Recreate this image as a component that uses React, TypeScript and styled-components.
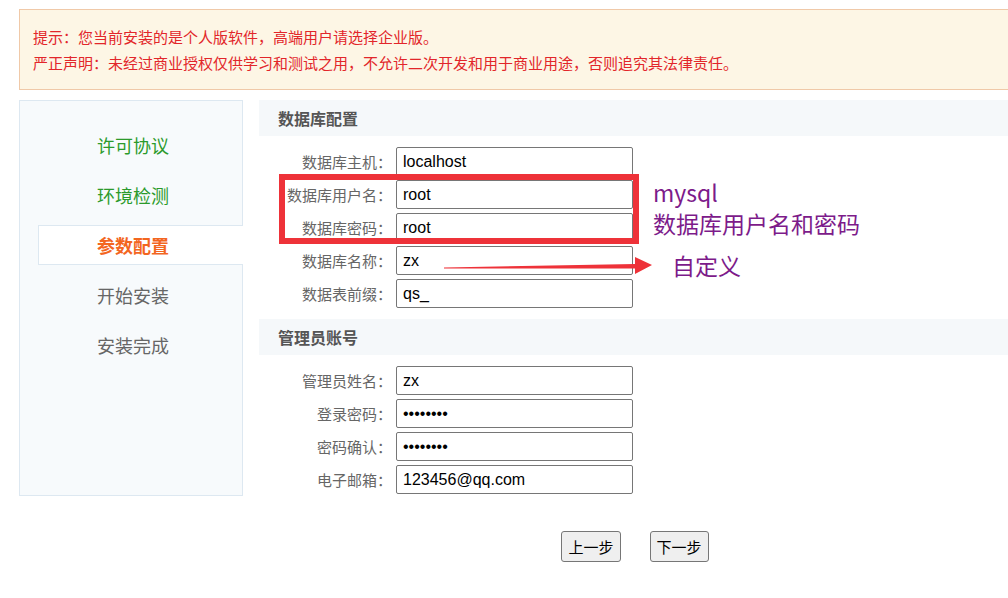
import React from "react";
import styled, { createGlobalStyle } from "styled-components";

const Global = createGlobalStyle`
  html, body { margin: 0; padding: 0; overflow: hidden; background: #fff; }
  body { font-family: "Liberation Sans", "Noto Sans CJK SC", sans-serif; }
  * { box-sizing: border-box; }
`;

const Page = styled.div`
  position: relative;
  width: 1030px;
  padding: 9px 0 0 19px;
  height: 598px;
`;

const Notice = styled.div`
  background: #fdf6e5;
  border: 1px solid #f0c9a8;
  padding: 14px 13px 13px;
  height: 81px;
  color: #e2262a;
  font-size: 15px;
  line-height: 26px;
  font-family: "Noto Sans CJK SC", sans-serif;
`;

const Main = styled.div`
  display: grid;
  grid-template-columns: 224px 1fr;
  column-gap: 16px;
  margin-top: 10px;
`;

const Sidebar = styled.div`
  height: 396px;
  background: #f7fafc;
  border: 1px solid #dde8f1;
  padding-top: 24px;
  display: flex;
  flex-direction: column;
  gap: 10px;
`;

const Step = styled.div<{ $state: "done" | "active" | "todo" }>`
  height: 40px;
  display: flex;
  align-items: center;
  font-family: "Noto Sans CJK SC", sans-serif;
  font-size: 18px;
  padding-left: ${(p) => (p.$state === "active" ? "58px" : "77px")};
  margin-left: ${(p) => (p.$state === "active" ? "18px" : "0")};
  margin-right: -1px;
  background: ${(p) => (p.$state === "active" ? "#fff" : "transparent")};
  border: ${(p) => (p.$state === "active" ? "1px solid #dde8f1" : "none")};
  border-right: none;
  color: ${(p) =>
    p.$state === "active" ? "#f3661f" : p.$state === "done" ? "#2b9a2b" : "#666"};
  font-weight: ${(p) => (p.$state === "active" ? 700 : 400)};
`;

const Content = styled.div`
  display: flex;
  flex-direction: column;
`;

const SectionTitle = styled.div`
  height: 36px;
  background: #f5f8fa;
  padding-left: 19px;
  display: flex;
  align-items: center;
  font-family: "Noto Sans CJK SC", sans-serif;
  font-size: 16px;
  font-weight: 700;
  color: #555;
`;

const Fields = styled.div`
  display: flex;
  flex-direction: column;
  gap: 4px;
  padding: 11px 0;
`;

const Row = styled.div`
  display: flex;
  align-items: center;
  height: 29px;
`;

const Label = styled.label`
  width: 137px;
  text-align: right;
  padding-right: 4px;
  font-family: "Noto Sans CJK SC", sans-serif;
  font-size: 15px;
  color: #666;
  white-space: nowrap;
`;

const Input = styled.input`
  width: 237px;
  height: 29px;
  border: 1px solid #767676;
  border-radius: 2px;
  padding: 0 6px;
  font-family: "Liberation Sans", "Noto Sans CJK SC", sans-serif;
  font-size: 16px;
  color: #000;
  background: #fff;
  outline: none;
`;

const Footer = styled.div`
  grid-column: 2;
  display: flex;
  justify-content: center;
  gap: 29px;
  margin-top: 26px;
  padding-right: 19px;
`;

const Button = styled.button`
  height: 31px;
  padding: 0 6px;
  font-family: "Noto Sans CJK SC", sans-serif;
  font-size: 15px;
  color: #000;
  background: #efefef;
  border: 1px solid #767676;
  border-radius: 3px;
`;

const RedBox = styled.div`
  position: absolute;
  left: 279px;
  top: 174px;
  width: 360px;
  height: 70px;
  border: 6px solid #ee3239;
  pointer-events: none;
`;

const Note = styled.div<{ $left: number; $top: number }>`
  position: absolute;
  left: ${(p) => p.$left}px;
  top: ${(p) => p.$top}px;
  color: #7d1b8a;
  font-family: "Noto Sans CJK SC", sans-serif;
  font-size: 23px;
  line-height: 31px;
  white-space: nowrap;
`;

const ArrowSvg = styled.svg`
  position: absolute;
  left: 440px;
  top: 255px;
`;

const steps: { text: string; state: "done" | "active" | "todo" }[] = [
  { text: "许可协议", state: "done" },
  { text: "环境检测", state: "done" },
  { text: "参数配置", state: "active" },
  { text: "开始安装", state: "todo" },
  { text: "安装完成", state: "todo" },
];

const dbFields = [
  { label: "数据库主机：", value: "localhost", type: "text" },
  { label: "数据库用户名：", value: "root", type: "text" },
  { label: "数据库密码：", value: "root", type: "text" },
  { label: "数据库名称：", value: "zx", type: "text" },
  { label: "数据表前缀：", value: "qs_", type: "text" },
];

const adminFields = [
  { label: "管理员姓名：", value: "zx", type: "text" },
  { label: "登录密码：", value: "12345678", type: "password" },
  { label: "密码确认：", value: "12345678", type: "password" },
  { label: "电子邮箱：", value: "123456@qq.com", type: "text" },
];

export default function App() {
  return (
    <>
      <Global />
      <Page>
        <Notice>
          <div>提示：您当前安装的是个人版软件，高端用户请选择企业版。</div>
          <div>严正声明：未经过商业授权仅供学习和测试之用，不允许二次开发和用于商业用途，否则追究其法律责任。</div>
        </Notice>
        <Main>
          <Sidebar>
            {steps.map((s) => (
              <Step key={s.text} $state={s.state}>
                {s.text}
              </Step>
            ))}
          </Sidebar>
          <Content>
            <SectionTitle>数据库配置</SectionTitle>
            <Fields>
              {dbFields.map((f) => (
                <Row key={f.label}>
                  <Label>{f.label}</Label>
                  <Input type={f.type} defaultValue={f.value} readOnly />
                </Row>
              ))}
            </Fields>
            <SectionTitle>管理员账号</SectionTitle>
            <Fields>
              {adminFields.map((f) => (
                <Row key={f.label}>
                  <Label>{f.label}</Label>
                  <Input type={f.type} defaultValue={f.value} readOnly />
                </Row>
              ))}
            </Fields>
          </Content>
          <Footer>
            <Button>上一步</Button>
            <Button>下一步</Button>
          </Footer>
        </Main>
        <RedBox />
        <Note $left={653} $top={177}>mysql</Note>
        <Note $left={653} $top={208}>数据库用户名和密码</Note>
        <Note $left={672} $top={250}>自定义</Note>
        <ArrowSvg width="216" height="24" viewBox="0 0 216 24">
          <polygon points="4,12.5 195,9 195,2 212,10 195,19 195,13.5 4,13.5" fill="#ee3239" />
        </ArrowSvg>
      </Page>
    </>
  );
}
